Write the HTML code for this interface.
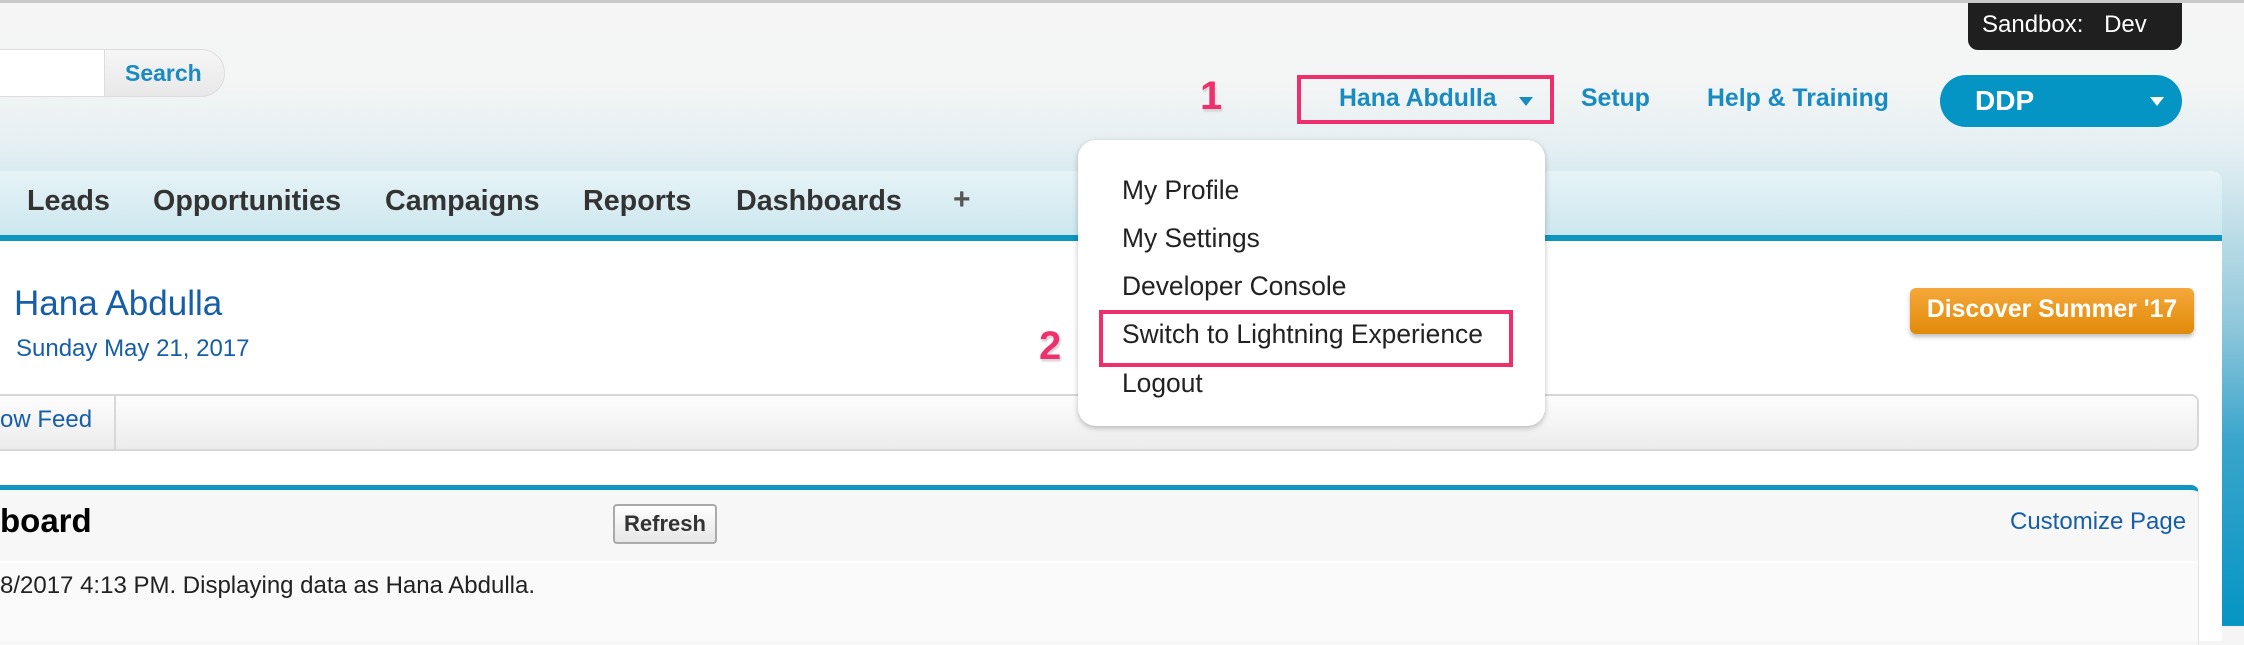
<!DOCTYPE html>
<html><head><meta charset="utf-8"><style>
*{margin:0;padding:0;box-sizing:border-box}
body{width:2244px;height:626px;overflow:hidden;position:relative;font-family:"Liberation Sans",Arial,sans-serif;background:linear-gradient(#f5f5f5 0px,#f4f5f5 80px,#e4eff3 150px,#b9dbe6 240px,#8cc6da 330px,#3aa5cc 440px,#0595c4 626px)}
.hdr{position:absolute;left:0;top:0;width:2244px;height:3px;background:#c9c9c9}
.abs{position:absolute}
.search-in{left:0;top:49px;width:106px;height:48px;background:#fff;border:1px solid #ddd;border-left:none}
.search-btn{left:104px;top:49px;width:121px;height:48px;background:linear-gradient(#f6f6f6,#e8e8e8);border:1px solid #ddd;border-radius:0 24px 24px 0;color:#1a8bc1;font-weight:bold;font-size:23px;line-height:46px;padding-left:20px}
.sandbox{left:1968px;top:3px;width:214px;height:47px;background:#1f1f1f;border-radius:0 0 10px 10px;color:#fff;font-size:24px;line-height:44px;padding-left:14px;word-spacing:14px}
.pink{color:#f0306e;font-weight:bold;font-size:40px;text-shadow:0 0 3px #fff,1px 2px 2px #bbb}
.box{border:4px solid #ee2f6c}
.toplink{color:#1a8bc1;font-weight:bold;font-size:24.8px;top:85px}
.ddp{left:1940px;top:75px;width:242px;height:52px;background:#0595c4;border-radius:26px;color:#fff;font-weight:bold;font-size:28px;line-height:52px;padding-left:35px}
.tri{width:0;height:0;border-left:7px solid transparent;border-right:7px solid transparent;border-top:9px solid #fff}
.tabbar{left:0;top:171px;width:2222px;height:70px;background:linear-gradient(#e6f3f7,#cde7ef);border-radius:0 10px 0 0;border-bottom:6px solid #0e95c0}
.tab{top:185px;font-size:28.7px;font-weight:bold;color:#333}
.main{left:0;top:241px;width:2222px;height:400px;background:#fff}
.name{left:14px;top:284px;color:#165ea8;font-size:35px}
.date{left:16px;top:335px;color:#165ea8;font-size:24px}
.disc{left:1910px;top:288px;width:284px;height:46px;background:linear-gradient(#f5a83a,#e08a09);border-radius:6px;color:#fff;font-weight:bold;font-size:24.7px;line-height:44px;text-align:center;box-shadow:0 3px 4px rgba(0,0,0,.25)}
.feed{left:0;top:394px;width:2199px;height:57px;background:linear-gradient(#fdfdfd,#ececec);border:2px solid #d8d8d8;border-left:none;border-radius:0 8px 8px 0}
.dash{left:0;top:485px;width:2199px;height:160px;background:#f7f7f7;border-top:5px solid #0e95c0;border-right:1px solid #e4e4e4;border-radius:0 8px 0 0}
.menu{left:1078px;top:140px;width:467px;height:286px;background:#fff;border-radius:18px;box-shadow:0 2px 6px rgba(0,0,0,.25)}
.mi{left:1122px;font-size:26.4px;color:#222}
</style></head><body>
<div class="hdr"></div>
<div class="abs search-in"></div>
<div class="abs search-btn">Search</div>
<div class="abs sandbox">Sandbox: Dev</div>
<div class="abs pink" style="left:1200px;top:74px">1</div>
<div class="abs box" style="left:1297px;top:75px;width:257px;height:49px"></div>
<div class="abs toplink" style="left:1339px">Hana Abdulla</div>
<div class="abs" style="left:1519px;top:97px;width:0;height:0;border-left:7px solid transparent;border-right:7px solid transparent;border-top:9px solid #1a8bc1"></div>
<div class="abs toplink" style="left:1581px">Setup</div>
<div class="abs toplink" style="left:1707px">Help &amp; Training</div>
<div class="abs ddp">DDP</div>
<div class="abs tri" style="left:2150px;top:97px"></div>
<div class="abs tabbar"></div>
<div class="abs tab" style="left:27px">Leads</div>
<div class="abs tab" style="left:153px">Opportunities</div>
<div class="abs tab" style="left:385px">Campaigns</div>
<div class="abs tab" style="left:583px">Reports</div>
<div class="abs tab" style="left:736px">Dashboards</div>
<div class="abs tab" style="left:953px;color:#555;font-size:30px;top:183px">+</div>
<div class="abs main"></div>
<div class="abs name">Hana Abdulla</div>
<div class="abs date">Sunday May 21, 2017</div>
<div class="abs disc">Discover Summer '17</div>
<div class="abs feed"></div>
<div class="abs" style="left:114px;top:396px;width:2px;height:53px;background:#d8d8d8"></div>
<div class="abs" style="left:0;top:406px;font-size:24px;color:#165ea8">ow Feed</div>
<div class="abs dash"></div>
<div class="abs" style="left:0;top:561px;width:2198px;height:80px;background:#fafafa;border-top:2px solid #fff"></div>
<div class="abs" style="left:0;top:502px;font-size:33px;font-weight:bold;color:#000">board</div>
<div class="abs" style="left:613px;top:504px;width:104px;height:40px;background:linear-gradient(#fff,#e6e6e6);border:2px solid #aaa;border-radius:4px;font-size:22px;font-weight:bold;color:#333;text-align:center;line-height:36px">Refresh</div>
<div class="abs" style="left:2010px;top:508px;font-size:24px;color:#165ea8">Customize Page</div>
<div class="abs" style="left:0;top:572px;font-size:24px;color:#222">8/2017 4:13 PM. Displaying data as Hana Abdulla.</div>
<div class="abs menu"></div>
<div class="abs mi" style="top:175px">My Profile</div>
<div class="abs mi" style="top:223px">My Settings</div>
<div class="abs mi" style="top:271px">Developer Console</div>
<div class="abs mi" style="top:319px">Switch to Lightning Experience</div>
<div class="abs mi" style="top:368px">Logout</div>
<div class="abs box" style="left:1099px;top:310px;width:414px;height:57px"></div>
<div class="abs pink" style="left:1039px;top:324px">2</div>
</body></html>
